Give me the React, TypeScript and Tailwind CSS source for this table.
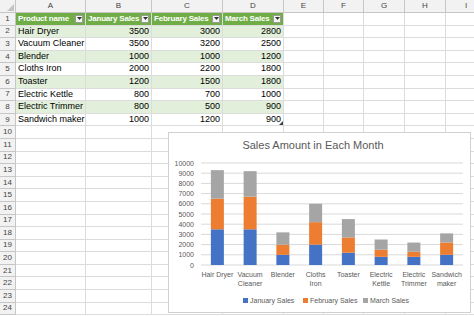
import React from "react"

const cols = ["A", "B", "C", "D", "E", "F", "G", "H", "I"]

const products = [
  { name: "Hair Dryer", jan: 3500, feb: 3000, mar: 2800, label: ["Hair Dryer"] },
  { name: "Vacuum Cleaner", jan: 3500, feb: 3200, mar: 2500, label: ["Vacuum", "Cleaner"] },
  { name: "Blender", jan: 1000, feb: 1000, mar: 1200, label: ["Blender"] },
  { name: "Cloths Iron", jan: 2000, feb: 2200, mar: 1800, label: ["Cloths", "Iron"] },
  { name: "Toaster", jan: 1200, feb: 1500, mar: 1800, label: ["Toaster"] },
  { name: "Electric Kettle", jan: 800, feb: 700, mar: 1000, label: ["Electric", "Kettle"] },
  { name: "Electric Trimmer", jan: 800, feb: 500, mar: 900, label: ["Electric", "Trimmer"] },
  { name: "Sandwich maker", jan: 1000, feb: 1200, mar: 900, label: ["Sandwich", "maker"] },
]

const headers = ["Product name", "January Sales", "February Sales", "March Sales"]

function FilterButton() {
  return (
    <span className="ml-auto flex h-[8px] w-[8px] shrink-0 items-center justify-center border border-[#9a9a9a] bg-[#f4f4f4]">
      <svg width="5" height="3" viewBox="0 0 5 3">
        <path d="M0 0h5L2.5 3z" fill="#333" />
      </svg>
    </span>
  )
}

function Cell({ children, className = "" }: { children?: React.ReactNode; className?: string }) {
  return (
    <div className={`flex min-w-0 items-center overflow-hidden whitespace-nowrap border-b border-r border-[#dcdcdc] px-[2px] ${className}`}>
      {children}
    </div>
  )
}

function Chart() {
  const x0 = 32
  const x1 = 294
  const yTop = 30
  const yZero = 132
  const step = (x1 - x0) / products.length
  const scale = (yZero - yTop) / 10000
  const barW = 13
  const ticks = [0, 1000, 2000, 3000, 4000, 5000, 6000, 7000, 8000, 9000, 10000]

  return (
    <div className="absolute left-[168px] top-[132px] h-[181px] w-[303px] border border-[#d0d0d0] bg-white">
      <svg width="303" height="181" className="block" style={{ fontFamily: "'Liberation Sans', Arial, sans-serif" }}>
        <text x="144" y="16" textAnchor="middle" fontSize="11" fill="#595959">
          Sales Amount in Each Month
        </text>
        {ticks.map((t) => {
          const y = yZero - t * scale
          return (
            <g key={t}>
              <line x1={x0} x2={x1} y1={y} y2={y} stroke="#d9d9d9" strokeWidth="1" />
              <text x="25" y={y + 2.5} textAnchor="end" fontSize="7" fill="#595959">
                {t}
              </text>
            </g>
          )
        })}
        {products.map((p, i) => {
          const cx = x0 + step * i + step / 2
          const hJan = p.jan * scale
          const hFeb = p.feb * scale
          const hMar = p.mar * scale
          return (
            <g key={p.name}>
              <rect x={cx - barW / 2} y={yZero - hJan} width={barW} height={hJan} fill="#4472c4" />
              <rect x={cx - barW / 2} y={yZero - hJan - hFeb} width={barW} height={hFeb} fill="#ed7d31" />
              <rect x={cx - barW / 2} y={yZero - hJan - hFeb - hMar} width={barW} height={hMar} fill="#a5a5a5" />
              {p.label.map((l, j) => (
                <text key={l} x={cx} y={144 + j * 9} textAnchor="middle" fontSize="7" fill="#595959">
                  {l}
                </text>
              ))}
            </g>
          )
        })}
        <rect x="74" y="165" width="5" height="5" fill="#4472c4" />
        <text x="81" y="170" fontSize="7" fill="#595959">January Sales</text>
        <rect x="134" y="165" width="5" height="5" fill="#ed7d31" />
        <text x="141" y="170" fontSize="7" fill="#595959">February Sales</text>
        <rect x="194" y="165" width="5" height="5" fill="#a5a5a5" />
        <text x="201" y="170" fontSize="7" fill="#595959">March Sales</text>
      </svg>
    </div>
  )
}

export default function App() {
  const rows = Array.from({ length: 24 }, (_, i) => i + 1)

  return (
    <div className="relative h-[316px] w-[474px] overflow-hidden bg-white font-['Liberation_Sans',Arial,sans-serif] text-[9px] text-black">
      <div className="grid w-[487px] grid-cols-[16px_70px_66px_71px_61px_40px_40px_41px_41px_41px] grid-rows-[13px_repeat(24,12.6px)]">
        {/* corner */}
        <div className="relative border-b border-r border-[#c6c6c6] bg-[#f2f2f2]">
          <svg width="7" height="7" viewBox="0 0 7 7" className="absolute bottom-[1px] right-[1px]">
            <path d="M7 0v7H0z" fill="#c3c3c3" />
          </svg>
        </div>
        {cols.map((c) => (
          <div key={c} className="flex items-center justify-center border-b border-r border-[#c6c6c6] bg-[#f2f2f2] text-[8px] text-[#444]">
            {c}
          </div>
        ))}

        {rows.map((r) => {
          const rowHead = (
            <div className="flex items-center justify-center border-b border-r border-[#c6c6c6] bg-[#f2f2f2] text-[8px] text-[#444]">
              {r}
            </div>
          )
          if (r === 1) {
            return (
              <React.Fragment key={r}>
                {rowHead}
                {headers.map((h) => (
                  <Cell key={h} className="gap-[1px] border-[#8fc06d] bg-[#70ad47] text-[8px] font-bold tracking-[-0.2px] text-white">
                    <span>{h}</span>
                    <FilterButton />
                  </Cell>
                ))}
                {cols.slice(4).map((c) => (
                  <Cell key={c} />
                ))}
              </React.Fragment>
            )
          }
          const p = products[r - 2]
          if (p) {
            const band = r % 2 === 0 ? "bg-[#e2efda] border-[#c9dfbb]" : "bg-white border-[#dcdcdc]"
            return (
              <React.Fragment key={r}>
                {rowHead}
                <Cell className={band}>{p.name}</Cell>
                <Cell className={`${band} justify-end`}>{p.jan}</Cell>
                <Cell className={`${band} justify-end`}>{p.feb}</Cell>
                <Cell className={`${band} relative justify-end`}>
                  {p.mar}
                  {r === 9 && (
                    <svg width="4" height="4" viewBox="0 0 4 4" className="absolute bottom-0 right-0">
                      <path d="M4 0v4H0z" fill="#404040" />
                    </svg>
                  )}
                </Cell>
                {cols.slice(4).map((c) => (
                  <Cell key={c} />
                ))}
              </React.Fragment>
            )
          }
          return (
            <React.Fragment key={r}>
              {rowHead}
              {cols.map((c) => (
                <Cell key={c} />
              ))}
            </React.Fragment>
          )
        })}
      </div>
      <Chart />
    </div>
  )
}
